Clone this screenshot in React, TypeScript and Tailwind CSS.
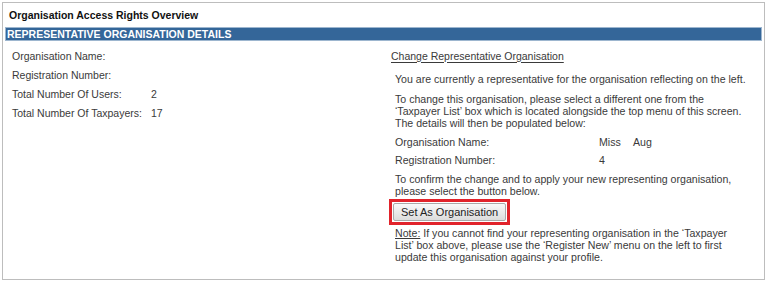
function App() {
  return (
    <main className="h-[282px] w-[768px] bg-white p-[2px] font-['Liberation_Sans',Arial,sans-serif] text-[10.5px] leading-[12px] text-[#3a3a3a]">
      <div className="h-[278px] w-[763px] border border-[#bdbdbd] px-[2px]">
        <h1 className="pt-[6px] pl-[4px] text-[10.5px] font-bold leading-[12px] text-[#111]">
          Organisation Access Rights Overview
        </h1>

        <div className="mt-[6px] h-[14px] border border-[#9db6cf] bg-[#346699] pl-[1px] text-[10.5px] font-bold leading-[12px] text-white">
          REPRESENTATIVE ORGANISATION DETAILS
        </div>

        <div className="grid grid-cols-[383px_1fr]">
          <div className="pt-[5px] pl-[7px]">
            <div className="flex h-[19px] items-center">
              <span className="w-[139px]">Organisation Name:</span>
            </div>
            <div className="flex h-[19px] items-center">
              <span className="w-[139px]">Registration Number:</span>
            </div>
            <div className="flex h-[19px] items-center">
              <span className="w-[139px]">Total Number Of Users:</span>
              <span>2</span>
            </div>
            <div className="flex h-[19px] items-center">
              <span className="w-[139px]">Total Number Of Taxpayers:</span>
              <span>17</span>
            </div>
          </div>

          <div className="pt-[5px] pr-[8px]">
            <div className="flex h-[19px] items-center pl-[3px]">
              <span className="underline underline-offset-2">
                Change Representative Organisation
              </span>
            </div>

            <div className="pl-[7px] text-[10.6px]">
              <p className="mt-[8px]">
                You are currently a representative for the organisation reflecting on the left.
              </p>
              <p className="mt-[8px]">
                To change this organisation, please select a different one from the
                <br />
                &lsquo;Taxpayer List&rsquo; box which is located alongside the top menu of this screen.
                <br />
                The details will then be populated below:
              </p>

              <div className="mt-[4px] flex h-[18px] items-center">
                <span className="w-[204px]">Organisation Name:</span>
                <span className="w-[34px]">Miss</span>
                <span>Aug</span>
              </div>
              <div className="flex h-[18px] items-center">
                <span className="w-[204px]">Registration Number:</span>
                <span>4</span>
              </div>

              <p className="mt-[4px]">
                To confirm the change and to apply your new representing organisation,
                <br />
                please select the button below.
              </p>
            </div>

            <div className="mt-[2px] ml-[1px] inline-block border-[3px] border-[#e1232b] p-[1px]">
              <button className="h-[18px] rounded-[2px] border border-[#a9a9a9] bg-gradient-to-b from-[#f9f9f9] to-[#dcdcdc] px-[7px] text-[11px] leading-[13px] text-[#222]">
                Set As Organisation
              </button>
            </div>

            <p className="mt-[2px] pl-[7px] text-[10.6px]">
              <span className="underline">Note:</span> If you cannot find your representing organisation in the &lsquo;Taxpayer
              <br />
              List&rsquo; box above, please use the &lsquo;Register New&rsquo; menu on the left to first
              <br />
              update this organisation against your profile.
            </p>
          </div>
        </div>
      </div>
    </main>
  );
}

export default App;
